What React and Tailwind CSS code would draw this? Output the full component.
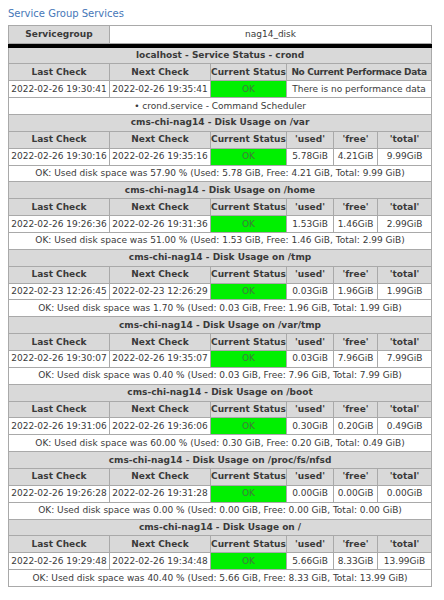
import React from "react";

const blocks = [
  {
    title: "localhost - Service Status - crond",
    last: "2022-02-26 19:30:41",
    next: "2022-02-26 19:35:41",
    perf: null,
    desc: "• crond.service - Command Scheduler",
  },
  { title: "cms-chi-nag14 - Disk Usage on /var", last: "2022-02-26 19:30:16", next: "2022-02-26 19:35:16", perf: ["5.78GiB", "4.21GiB", "9.99GiB"], desc: "OK: Used disk space was 57.90 % (Used: 5.78 GiB, Free: 4.21 GiB, Total: 9.99 GiB)" },
  { title: "cms-chi-nag14 - Disk Usage on /home", last: "2022-02-26 19:26:36", next: "2022-02-26 19:31:36", perf: ["1.53GiB", "1.46GiB", "2.99GiB"], desc: "OK: Used disk space was 51.00 % (Used: 1.53 GiB, Free: 1.46 GiB, Total: 2.99 GiB)" },
  { title: "cms-chi-nag14 - Disk Usage on /tmp", last: "2022-02-23 12:26:45", next: "2022-02-23 12:26:29", perf: ["0.03GiB", "1.96GiB", "1.99GiB"], desc: "OK: Used disk space was 1.70 % (Used: 0.03 GiB, Free: 1.96 GiB, Total: 1.99 GiB)" },
  { title: "cms-chi-nag14 - Disk Usage on /var/tmp", last: "2022-02-26 19:30:07", next: "2022-02-26 19:35:07", perf: ["0.03GiB", "7.96GiB", "7.99GiB"], desc: "OK: Used disk space was 0.40 % (Used: 0.03 GiB, Free: 7.96 GiB, Total: 7.99 GiB)" },
  { title: "cms-chi-nag14 - Disk Usage on /boot", last: "2022-02-26 19:31:06", next: "2022-02-26 19:36:06", perf: ["0.30GiB", "0.20GiB", "0.49GiB"], desc: "OK: Used disk space was 60.00 % (Used: 0.30 GiB, Free: 0.20 GiB, Total: 0.49 GiB)" },
  { title: "cms-chi-nag14 - Disk Usage on /proc/fs/nfsd", last: "2022-02-26 19:26:28", next: "2022-02-26 19:31:28", perf: ["0.00GiB", "0.00GiB", "0.00GiB"], desc: "OK: Used disk space was 0.00 % (Used: 0.00 GiB, Free: 0.00 GiB, Total: 0.00 GiB)" },
  { title: "cms-chi-nag14 - Disk Usage on /", last: "2022-02-26 19:29:48", next: "2022-02-26 19:34:48", perf: ["5.66GiB", "8.33GiB", "13.99GiB"], desc: "OK: Used disk space was 40.40 % (Used: 5.66 GiB, Free: 8.33 GiB, Total: 13.99 GiB)" },
];

const hd = "border border-[#a9a9a9] bg-[#d9d9d9] font-bold text-[#3a3a3a] text-center p-0 whitespace-nowrap";
const cell = "border border-[#a9a9a9] bg-white text-[#3a3a3a] text-center p-0 whitespace-nowrap";
const rowH = "h-[16.86px]";

export default function App() {
  return (
    <div className="bg-white w-[444px] h-[600px] pl-[8px] pt-[7px]" style={{ fontFamily: '"DejaVu Sans", Verdana, sans-serif' }}>
      <div className="text-[10px] leading-[13px] text-[#4677b8] mb-[5px]">Service Group Services</div>
      <table className="table-fixed border-collapse w-[423px] text-[9px] leading-[11px]">
        <colgroup>
          <col className="w-[101px]" />
          <col className="w-[101px]" />
          <col className="w-[76px]" />
          <col className="w-[47px]" />
          <col className="w-[44px]" />
          <col className="w-[54px]" />
        </colgroup>
        <tbody>
          <tr className="h-[17.5px]">
            <td className={hd}>Servicegroup</td>
            <td className={cell} colSpan={5}>nag14_disk</td>
          </tr>
          <tr className="h-[4px]">
            <td colSpan={6} className="bg-black p-0 border border-black"></td>
          </tr>
          {blocks.map((b, i) => (
            <React.Fragment key={i}>
              <tr className={rowH}>
                <td colSpan={6} className={hd}>{b.title}</td>
              </tr>
              <tr className={rowH}>
                <td className={hd}>Last Check</td>
                <td className={hd}>Next Check</td>
                <td className={hd}>Current Status</td>
                {b.perf ? (
                  <>
                    <td className={hd}>'used'</td>
                    <td className={hd}>'free'</td>
                    <td className={hd}>'total'</td>
                  </>
                ) : (
                  <td colSpan={3} className={hd + " tracking-[-0.35px]"}>No Current Performace Data</td>
                )}
              </tr>
              <tr className={rowH}>
                <td className={cell}>{b.last}</td>
                <td className={cell}>{b.next}</td>
                <td className="border border-[#a9a9a9] bg-[#00f000] text-[#3f7a3f] text-center p-0">OK</td>
                {b.perf ? (
                  b.perf.map((p, j) => (
                    <td key={j} className={cell}>{p}</td>
                  ))
                ) : (
                  <td colSpan={3} className={cell}>There is no performance data</td>
                )}
              </tr>
              <tr className={rowH}>
                <td colSpan={6} className={cell}>{b.desc}</td>
              </tr>
            </React.Fragment>
          ))}
        </tbody>
      </table>
    </div>
  );
}
